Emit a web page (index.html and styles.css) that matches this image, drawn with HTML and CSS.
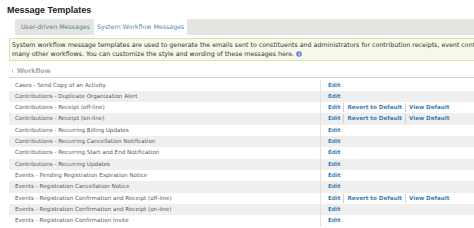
FILE: index.html
```html
<!DOCTYPE html>
<html lang="en">
  <head>
    <meta charset="UTF-8" />
    <title>Message Templates</title>
    <link rel="stylesheet" href="styles.css">
  </head>
  <body>
    <div class="page">
      <h1 class="page-title">Message Templates</h1>

      <div class="tabs">
        <a class="tab">User-driven Messages</a>
        <a class="tab active">System Workflow Messages</a>
      </div>

      <div class="help">
        System workflow message templates are used to generate the emails sent to constituents and administrators for contribution receipts, event confirmations and<br>
        many other workflows. You can customize the style and wording of these messages here.
        <svg class="help-icon" width="6" height="6" viewBox="0 0 12 12"><circle cx="6" cy="6" r="5.5" fill="#5b7fc4"/><text x="6" y="9.2" text-anchor="middle" font-size="9" font-weight="bold" fill="#fff" font-family="DejaVu Sans, sans-serif">?</text></svg>
      </div>

      <div class="section-head"><span class="toggle"></span>Workflow</div>

      <table class="templates">
        <tbody>
          <tr><td class="name">Cases - Send Copy of an Activity</td><td class="actions"><a>Edit</a></td></tr>
          <tr><td class="name">Contributions - Duplicate Organization Alert</td><td class="actions"><a>Edit</a></td></tr>
          <tr><td class="name">Contributions - Receipt (off-line)</td><td class="actions"><a>Edit</a><span class="sep"></span><a>Revert to Default</a><span class="sep"></span><a>View Default</a></td></tr>
          <tr><td class="name">Contributions - Receipt (on-line)</td><td class="actions"><a>Edit</a><span class="sep"></span><a>Revert to Default</a><span class="sep"></span><a>View Default</a></td></tr>
          <tr><td class="name">Contributions - Recurring Billing Updates</td><td class="actions"><a>Edit</a></td></tr>
          <tr><td class="name">Contributions - Recurring Cancellation Notification</td><td class="actions"><a>Edit</a></td></tr>
          <tr><td class="name">Contributions - Recurring Start and End Notification</td><td class="actions"><a>Edit</a></td></tr>
          <tr><td class="name">Contributions - Recurring Updates</td><td class="actions"><a>Edit</a></td></tr>
          <tr><td class="name">Events - Pending Registration Expiration Notice</td><td class="actions"><a>Edit</a></td></tr>
          <tr><td class="name">Events - Registration Cancellation Notice</td><td class="actions"><a>Edit</a></td></tr>
          <tr><td class="name">Events - Registration Confirmation and Receipt (off-line)</td><td class="actions"><a>Edit</a><span class="sep"></span><a>Revert to Default</a><span class="sep"></span><a>View Default</a></td></tr>
          <tr><td class="name">Events - Registration Confirmation and Receipt (on-line)</td><td class="actions"><a>Edit</a></td></tr>
          <tr><td class="name">Events - Registration Confirmation Invite</td><td class="actions"><a>Edit</a></td></tr>
        </tbody>
      </table>
    </div>
  </body>
</html>
```

FILE: styles.css
```css
body {
  margin: 0;
  padding: 0;
  background-color: #fff;
  font-family: "DejaVu Sans", Verdana, sans-serif;
  color: #444;
  overflow: hidden;
}
.page {
  width: 600px;
  padding-left: 9px;
}
.page-title {
  margin: 0 0 0 -2px;
  padding: 5px 0 0 0;
  font-family: "Liberation Sans", Arial, sans-serif;
  font-size: 9px;
  line-height: 11px;
  font-weight: bold;
  color: #222;
  height: 14px;
}
.tabs {
  display: flex;
  gap: 1px;
  margin-left: 6px;
  padding-left: 3px;
  height: 16px;
  background-color: #e4e4e0;
}
.tab {
  padding: 0 3px;
  font-size: 6.3px;
  line-height: 16px;
  color: #5d7f9f;
  cursor: pointer;
}
.tab.active {
  background-color: #fff;
  color: #4f8db5;
}
.help {
  margin-top: 3px;
  border: 1px solid #dbe3b5;
  background-color: #f6f9e8;
  padding: 1px 2px;
  font-size: 6.3px;
  line-height: 9.3px;
  color: #333;
  white-space: nowrap;
}
.help-icon {
  vertical-align: -1px;
}
.section-head {
  margin-top: 5px;
  padding-left: 3px;
  font-size: 6.4px;
  font-weight: bold;
  line-height: 11px;
  color: #a8a8a8;
  border-bottom: 1px solid #d4d4d4;
}
.toggle {
  display: inline-block;
  width: 1px;
  height: 4px;
  margin-right: 4px;
  background-color: #c8c8c8;
  vertical-align: 0;
}
.templates {
  margin-top: 2px;
  width: 600px;
  border-collapse: collapse;
}
.templates td {
  padding: 0;
  height: 11.3px;
  line-height: 11.3px;
  font-size: 5.6px;
  white-space: nowrap;
}
.templates tr:nth-child(even) {
  background-color: #efefef;
}
.name {
  width: 305px;
  padding-left: 6px !important;
  color: #5a5a5a;
  border-right: 1px solid #e2e2e2;
}
.actions {
  padding-left: 7px !important;
}
.actions a {
  color: #3f7fb3;
  font-weight: bold;
  cursor: pointer;
}
.sep {
  display: inline-block;
  width: 1px;
  height: 9px;
  margin: 0 3px;
  background-color: #d0d0d0;
  vertical-align: middle;
}
```
